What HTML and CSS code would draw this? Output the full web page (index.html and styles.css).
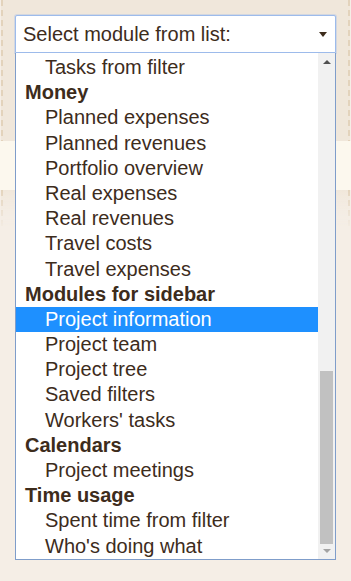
FILE: index.html
```html
<!DOCTYPE html>
<html lang="en">
<head>
    <meta charset="UTF-8">
    <meta name="viewport" content="width=device-width, initial-scale=1.0">
    <title>Select module</title>
    <link rel="stylesheet" href="styles.css">
</head>
<body>
    <div class="backdrop">
        <div class="panel panel-top"></div>
        <div class="band"></div>
        <div class="panel panel-fade"></div>
    </div>

    <div class="picker">
        <div class="select-box">
            <span class="select-text">Select module from list:</span>
            <span class="select-arrow"></span>
        </div>
        <div class="list">
            <div class="options">
                <div class="opt">Tasks from filter</div>
                <div class="group">Money</div>
                <div class="opt">Planned expenses</div>
                <div class="opt">Planned revenues</div>
                <div class="opt">Portfolio overview</div>
                <div class="opt">Real expenses</div>
                <div class="opt">Real revenues</div>
                <div class="opt">Travel costs</div>
                <div class="opt">Travel expenses</div>
                <div class="group">Modules for sidebar</div>
                <div class="opt selected">Project information</div>
                <div class="opt">Project team</div>
                <div class="opt">Project tree</div>
                <div class="opt">Saved filters</div>
                <div class="opt">Workers' tasks</div>
                <div class="group">Calendars</div>
                <div class="opt">Project meetings</div>
                <div class="group">Time usage</div>
                <div class="opt">Spent time from filter</div>
                <div class="opt">Who's doing what</div>
            </div>
            <div class="scrollbar">
                <span class="sb-up"></span>
                <div class="sb-track">
                    <div class="sb-thumb"></div>
                </div>
                <span class="sb-down"></span>
            </div>
        </div>
    </div>
</body>
</html>
```

FILE: styles.css
```css
body {
    margin: 0;
    background: #f5eee6;
    font-family: "Liberation Sans", Arial, sans-serif;
    color: #3d2c1c;
    height: 581px;
    overflow: hidden;
    position: relative;
}

/* page behind the open dropdown */
.backdrop { padding-top: 0; }
.panel {
    margin: 0 1px;
    background-color: #f0e7db;
    background-image:
        repeating-linear-gradient(to bottom, #e3d3bc 0 6px, transparent 6px 10px),
        repeating-linear-gradient(to bottom, #e3d3bc 0 6px, transparent 6px 10px);
    background-size: 2px 100%, 2px 100%;
    background-position: left top, right top;
    background-repeat: no-repeat;
}
.panel-top { height: 141px; }
.band { height: 49px; background: #fcf8ee; }
.panel-fade {
    height: 36px;
    background-color: transparent;
    background-image:
        repeating-linear-gradient(to bottom, #e3d3bc 0 6px, transparent 6px 10px),
        repeating-linear-gradient(to bottom, #e3d3bc 0 6px, transparent 6px 10px),
        linear-gradient(to bottom, #f0e7db, #f5eee6);
    background-size: 2px 100%, 2px 100%, 100% 100%;
    background-position: left top, right top, 0 0;
    -webkit-mask-image: linear-gradient(to bottom, #000, rgba(0,0,0,0.1));
    mask-image: linear-gradient(to bottom, #000, rgba(0,0,0,0.1));
}

/* the select and its open list */
.picker {
    position: absolute;
    left: 15px;
    top: 15px;
    width: 321px;
}
.select-box {
    height: 36px;
    border: 1px solid #9dbbeb;
    border-radius: 2px 2px 0 0;
    background: #fff;
    display: flex;
    align-items: center;
    padding: 0 8px 0 7px;
    font-size: 20px;
    box-shadow: 0 0 0 1px rgba(157, 187, 235, 0.35);
}
.select-text { flex: 1; padding-top: 1px; }
.select-arrow {
    width: 0;
    height: 0;
    border-left: 4px solid transparent;
    border-right: 4px solid transparent;
    border-top: 5px solid #3d2c1c;
    margin-right: 0;
}

.list {
    display: flex;
    height: 506px;
    border: 1px solid #7f9dca;
    border-top: none;
    background: #fff;
}
.options {
    flex: 1;
    padding-top: 2px;
    font-size: 20px;
}
.opt, .group {
    height: 25.2px;
    line-height: 25.2px;
    white-space: nowrap;
}
.opt { padding-left: 29px; }
.group { padding-left: 9px; font-weight: bold; }
.opt.selected { background: #1e90ff; color: #fff; }

.scrollbar {
    width: 17px;
    background: #f1f1f1;
    display: flex;
    flex-direction: column;
    align-items: center;
}
.sb-up, .sb-down {
    width: 0;
    height: 0;
    border-left: 4px solid transparent;
    border-right: 4px solid transparent;
}
.sb-up { border-bottom: 4px solid #505050; margin: 7px 0 6px; }
.sb-down { border-top: 4px solid #a3a3a3; margin: 5px 0 6px; }
.sb-track {
    flex: 1;
    width: 100%;
    display: flex;
    flex-direction: column;
    justify-content: flex-end;
}
.sb-thumb {
    height: 173px;
    margin: 0 2px;
    background: #c1c1c1;
}
```
